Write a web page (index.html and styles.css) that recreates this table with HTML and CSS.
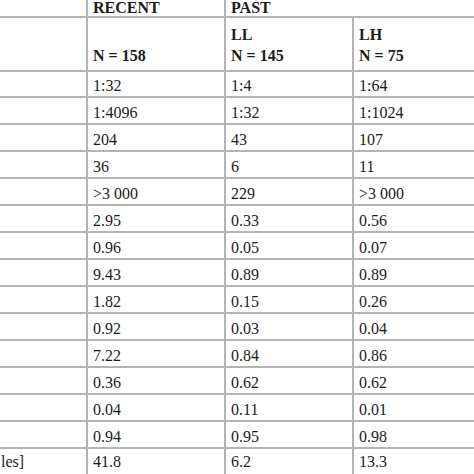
FILE: index.html
```html
<!DOCTYPE html>
<html>
<head>
<meta charset="utf-8">
<link rel="stylesheet" href="styles.css">
</head>
<body>
<table class="data">
  <colgroup>
    <col class="c-label">
    <col class="c-recent">
    <col class="c-ll">
    <col class="c-lh">
  </colgroup>
  <thead>
    <tr class="head-top">
      <th class="label"></th>
      <th>RECENT</th>
      <th colspan="2">PAST</th>
    </tr>
    <tr class="head-sub">
      <th class="label"></th>
      <th>N = 158</th>
      <th>LL<br>N = 145</th>
      <th>LH<br>N = 75</th>
    </tr>
  </thead>
  <tbody>
    <tr><td class="label"></td><td>1:32</td><td>1:4</td><td>1:64</td></tr>
    <tr><td class="label"></td><td>1:4096</td><td>1:32</td><td>1:1024</td></tr>
    <tr><td class="label"></td><td>204</td><td>43</td><td>107</td></tr>
    <tr><td class="label"></td><td>36</td><td>6</td><td>11</td></tr>
    <tr><td class="label"></td><td>&gt;3 000</td><td>229</td><td>&gt;3 000</td></tr>
    <tr><td class="label"></td><td>2.95</td><td>0.33</td><td>0.56</td></tr>
    <tr><td class="label"></td><td>0.96</td><td>0.05</td><td>0.07</td></tr>
    <tr><td class="label"></td><td>9.43</td><td>0.89</td><td>0.89</td></tr>
    <tr><td class="label"></td><td>1.82</td><td>0.15</td><td>0.26</td></tr>
    <tr><td class="label"></td><td>0.92</td><td>0.03</td><td>0.04</td></tr>
    <tr><td class="label"></td><td>7.22</td><td>0.84</td><td>0.86</td></tr>
    <tr><td class="label"></td><td>0.36</td><td>0.62</td><td>0.62</td></tr>
    <tr><td class="label"></td><td>0.04</td><td>0.11</td><td>0.01</td></tr>
    <tr><td class="label"></td><td>0.94</td><td>0.95</td><td>0.98</td></tr>
    <tr class="last"><td class="label cut">les]</td><td>41.8</td><td>6.2</td><td>13.3</td></tr>
  </tbody>
</table>
</body>
</html>
```

FILE: styles.css
```css
html, body {
  margin: 0;
  padding: 0;
  background: #ffffff;
  overflow: hidden;
  height: 474px;
}

.data {
  table-layout: fixed;
  width: 474px;
  border-collapse: separate;
  border-spacing: 0;
  font-family: "Liberation Serif", "Times New Roman", serif;
  font-size: 16px;
  color: #1c1c1c;
}

.c-label { width: 86px; }
.c-recent { width: 138px; }
.c-ll { width: 128px; }
.c-lh { width: 122px; }

.data th,
.data td {
  box-sizing: border-box;
  border-bottom: 2px solid #b4b4b4;
  border-left: 2px solid #b4b4b4;
  padding: 0 0 1px 5px;
  text-align: left;
  vertical-align: bottom;
  line-height: 18px;
  white-space: nowrap;
  overflow: hidden;
}

.data th {
  font-weight: bold;
}

.data .label {
  border-left: none;
  padding-left: 1px;
}

.head-top th {
  height: 18px;
  line-height: 16px;
  padding-bottom: 0;
}

.head-sub th {
  height: 54px;
  line-height: 21px;
  padding-bottom: 4px;
}

.data tbody tr td {
  height: 27px;
}

.data tbody tr:first-child td {
  height: 26px;
}

.data tr.last td {
  height: 30px;
  vertical-align: top;
  padding-top: 4px;
}
```
